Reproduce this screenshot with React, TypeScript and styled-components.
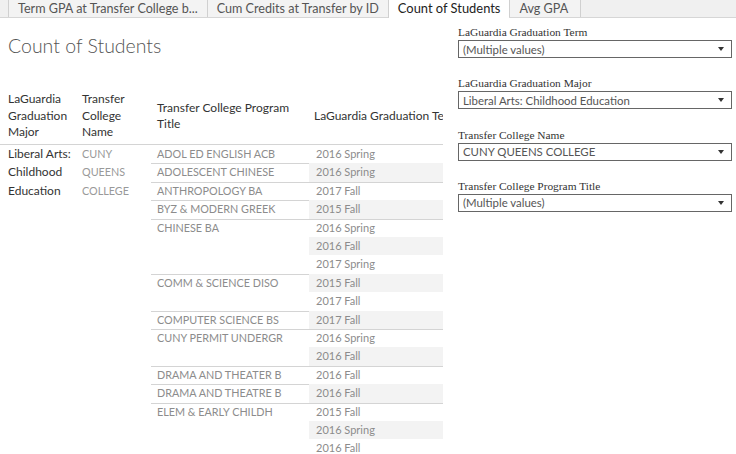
import React from "react";
import styled, { createGlobalStyle } from "styled-components";

const GlobalStyle = createGlobalStyle`
  html, body {
    margin: 0;
    padding: 0;
    background: #fff;
  }
  body {
    font-family: Lato, "Open Sans", sans-serif;
    overflow: hidden;
  }
  * {
    box-sizing: border-box;
  }
`;

const Page = styled.div`
  width: 736px;
  height: 454px;
  overflow: hidden;
`;

const TabBar = styled.div`
  display: flex;
  height: 18px;
  background: #f0f0f0;
  border-bottom: 1px solid #d6d6d6;
  padding-left: 8px;
`;

const Tab = styled.div<{ active?: boolean }>`
  padding: 0 9px;
  height: ${(p) => (p.active ? "18px" : "17px")};
  font-size: ${(p) => (p.active ? "12.9px" : "12.6px")};
  line-height: 17px;
  white-space: nowrap;
  color: ${(p) => (p.active ? "#222" : "#555")};
  background: ${(p) => (p.active ? "#fff" : "#f3f3f3")};
  border-left: 1px solid #d0d0d0;
  &:last-child {
    border-right: 1px solid #d0d0d0;
    padding-right: 12px;
  }
`;

const Content = styled.div`
  display: flex;
`;

const LeftPane = styled.div`
  width: 443px;
  overflow: hidden;
  flex-shrink: 0;
`;

const Title = styled.div`
  margin-top: 17px;
  padding-left: 8px;
  font-size: 19.5px;
  font-weight: 300;
  line-height: 22px;
  color: #555;
`;

const HeaderRow = styled.div`
  margin-top: 31px;
  height: 57px;
  display: grid;
  grid-template-columns: 8px 74px 69px 158px 200px;
  align-items: center;
  border-bottom: 1px solid #d4d4d4;
  width: 443px;
`;

const HeaderCell = styled.div<{ inset?: number }>`
  font-size: 12px;
  line-height: 16.5px;
  color: #333;
  padding-left: ${(p) => p.inset ?? 0}px;
  white-space: ${(p) => (p.inset ? "nowrap" : "normal")};
`;

const Body = styled.div`
  display: flex;
  padding-left: 8px;
`;

const PaneCol = styled.div<{ width: number; dark?: boolean }>`
  width: ${(p) => p.width}px;
  flex-shrink: 0;
  font-size: ${(p) => (p.dark ? "12px" : "10.8px")};
  line-height: 18.4px;
  color: ${(p) => (p.dark ? "#333" : "#999")};
`;

const Groups = styled.div`
  width: 292px;
  flex-shrink: 0;
`;

const Group = styled.div`
  display: grid;
  grid-template-columns: 158px 134px;
  & + & {
    box-shadow: inset 0 1px 0 #d4d4d4;
  }
`;

const ProgramCell = styled.div`
  padding-left: 6px;
  font-size: 10.8px;
  line-height: 18.4px;
  color: #8c8c8c;
  white-space: nowrap;
`;

const TermCell = styled.div<{ shaded: boolean }>`
  padding-left: 7px;
  font-size: 11px;
  line-height: 18.4px;
  height: 18.4px;
  color: #8c8c8c;
  background: ${(p) => (p.shaded ? "#f3f3f3" : "transparent")};
`;

const RightPane = styled.div`
  margin-left: 15px;
  width: 274px;
  padding-top: 7px;
`;

const Filter = styled.div`
  margin-bottom: 18.3px;
`;

const FilterLabel = styled.div`
  font-family: "Liberation Serif", "Times New Roman", serif;
  font-size: 11.4px;
  line-height: 14px;
  color: #333;
`;

const SelectBox = styled.div`
  margin-top: 1px;
  height: 18px;
  border: 1px solid #666;
  display: flex;
  align-items: center;
  justify-content: space-between;
  padding: 0 7px 0 4px;
  font-size: 11.4px;
  color: #555;
  background: #fff;
`;

const Caret = styled.span`
  width: 0;
  height: 0;
  border-left: 3px solid transparent;
  border-right: 3px solid transparent;
  border-top: 4px solid #333;
`;

type ProgramGroup = { title: string; terms: string[] };

const groups: ProgramGroup[] = [
  { title: "ADOL ED ENGLISH ACB", terms: ["2016 Spring"] },
  { title: "ADOLESCENT CHINESE", terms: ["2016 Spring"] },
  { title: "ANTHROPOLOGY BA", terms: ["2017 Fall"] },
  { title: "BYZ & MODERN GREEK", terms: ["2015 Fall"] },
  { title: "CHINESE BA", terms: ["2016 Spring", "2016 Fall", "2017 Spring"] },
  { title: "COMM & SCIENCE DISO", terms: ["2015 Fall", "2017 Fall"] },
  { title: "COMPUTER SCIENCE BS", terms: ["2017 Fall"] },
  { title: "CUNY PERMIT UNDERGR", terms: ["2016 Spring", "2016 Fall"] },
  { title: "DRAMA AND THEATER B", terms: ["2016 Fall"] },
  { title: "DRAMA AND THEATRE B", terms: ["2016 Fall"] },
  { title: "ELEM & EARLY CHILDH", terms: ["2015 Fall", "2016 Spring", "2016 Fall"] },
];

const filters = [
  { label: "LaGuardia Graduation Term", value: "(Multiple values)" },
  { label: "LaGuardia Graduation Major", value: "Liberal Arts: Childhood Education" },
  { label: "Transfer College Name", value: "CUNY QUEENS COLLEGE" },
  { label: "Transfer College Program Title", value: "(Multiple values)" },
];

const tabs = [
  "Term GPA at Transfer College b...",
  "Cum Credits at Transfer by ID",
  "Count of Students",
  "Avg GPA",
];

export default function App() {
  let rowIndex = 0;
  return (
    <Page>
      <GlobalStyle />
      <TabBar>
        {tabs.map((t) => (
          <Tab key={t} active={t === "Count of Students"}>
            {t}
          </Tab>
        ))}
      </TabBar>
      <Content>
        <LeftPane>
          <Title>Count of Students</Title>
          <HeaderRow>
            <span />
            <HeaderCell>
              LaGuardia
              <br />
              Graduation
              <br />
              Major
            </HeaderCell>
            <HeaderCell>
              Transfer
              <br />
              College
              <br />
              Name
            </HeaderCell>
            <HeaderCell inset={6}>
              Transfer College Program
              <br />
              Title
            </HeaderCell>
            <HeaderCell inset={5}>LaGuardia Graduation Term</HeaderCell>
          </HeaderRow>
          <Body>
            <PaneCol width={74} dark>
              Liberal Arts:
              <br />
              Childhood
              <br />
              Education
            </PaneCol>
            <PaneCol width={69}>
              CUNY
              <br />
              QUEENS
              <br />
              COLLEGE
            </PaneCol>
            <Groups>
              {groups.map((g) => (
                <Group key={g.title}>
                  <ProgramCell>{g.title}</ProgramCell>
                  <div>
                    {g.terms.map((term) => {
                      const shaded = rowIndex % 2 === 1;
                      rowIndex += 1;
                      return (
                        <TermCell key={term} shaded={shaded}>
                          {term}
                        </TermCell>
                      );
                    })}
                  </div>
                </Group>
              ))}
            </Groups>
          </Body>
        </LeftPane>
        <RightPane>
          {filters.map((f) => (
            <Filter key={f.label}>
              <FilterLabel>{f.label}</FilterLabel>
              <SelectBox>
                <span>{f.value}</span>
                <Caret />
              </SelectBox>
            </Filter>
          ))}
        </RightPane>
      </Content>
    </Page>
  );
}
